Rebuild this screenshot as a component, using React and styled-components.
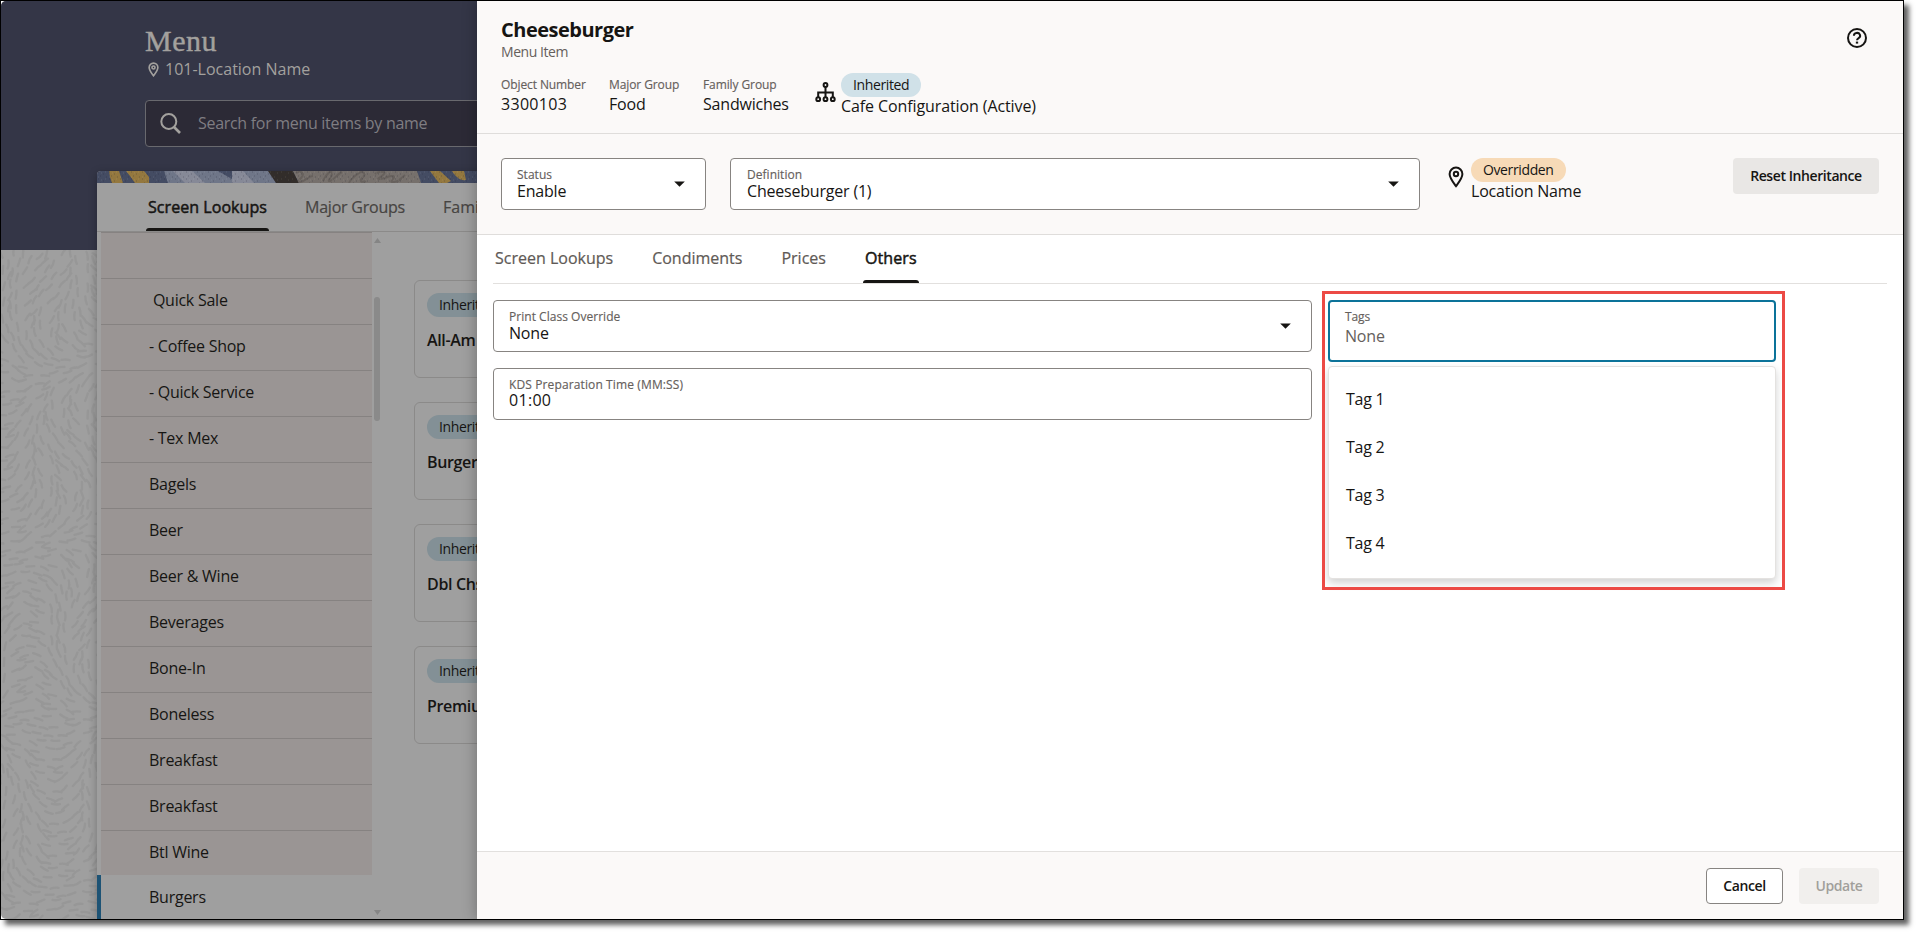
import styled, { createGlobalStyle, css } from "styled-components";

const GlobalStyle = createGlobalStyle`
  * {
    box-sizing: border-box;
  }

  body {
    margin: 0;
    min-height: 935px;
    background: #fff;
    color: #161513;
    font-family: "Open Sans", "Noto Sans", sans-serif;
    font-size: 16px;
    letter-spacing: -0.25px;
  }

  button {
    font-family: inherit;
  }
`;

const Frame = styled.div`
  position: relative;
  width: 1904px;
  height: 920px;
  border: 1px solid #000;
  background: #fff;
  box-shadow: 5px 5px 5px rgba(0, 0, 0, 0.62);
`;

/* ---------- page behind the drawer ---------- */

const Page = styled.div`
  position: relative;
  width: 480px;
  height: 918px;
  background: #9f9f9f;
  border-radius: 5px 0 0 5px;
  overflow: hidden;
`;

const Texture = styled.svg`
  position: absolute;
  left: 0;
  top: 249px;
`;

const Hero = styled.header`
  height: 249px;
  padding: 16px 0 0 144px;
  background: #343647;
  color: #a3a19e;
`;

const PageTitle = styled.h1`
  margin: 0;
  height: 41px;
  font-family: "Liberation Serif", serif;
  font-size: 30px;
  font-weight: 400;
  line-height: 47px;
  letter-spacing: 0.5px;
  -webkit-text-stroke: 0.4px #a3a19e;
`;

const PageLocation = styled.div`
  display: flex;
  align-items: center;
  gap: 6px;
  height: 22px;
  padding-left: 3px;
  letter-spacing: 0;
`;

const SearchBox = styled.div`
  display: flex;
  align-items: center;
  gap: 17px;
  width: 600px;
  height: 47px;
  margin-top: 20px;
  padding: 0 0 1px 14px;
  border: 1px solid #69696e;
  border-radius: 4px;
  background: #2c2a36;
  color: #7f7d82;
  letter-spacing: -0.3px;
`;

const Card = styled.section`
  position: relative;
  width: 600px;
  height: 748px;
  margin: -79px 0 0 96px;
  border-radius: 4px 4px 0 0;
  background: #9f9f9f;
  box-shadow: 0 2px 8px rgba(0, 0, 0, 0.28);
`;

const Band = styled.svg`
  display: block;
  border-radius: 4px 0 0 0;
`;

const CardTabs = styled.nav`
  display: flex;
  gap: 34px;
  height: 49px;
  padding-left: 49px;
  border-bottom: 1px solid #8b8a89;
`;

const Tab = styled.div`
  position: relative;
  padding: 0 2px;
  line-height: ${(p) => p.$line || 48}px;
  font-weight: 500;
  -webkit-text-stroke: 0.2px;
  white-space: nowrap;
  letter-spacing: ${(p) => p.$track || "0"};
  color: ${(p) => (p.$active ? "#161513" : p.$dim ? "#474442" : "#5f5a56")};

  ${(p) =>
    p.$active &&
    css`
      -webkit-text-stroke: 0.5px;

      &::after {
        content: "";
        position: absolute;
        left: 0;
        right: 0;
        bottom: 0;
        height: 3px;
        border-radius: 3px 3px 0 0;
        background: #161513;
      }
    `}
`;

const CardBody = styled.div`
  display: flex;
  height: 687px;
`;

const SideList = styled.ul`
  width: 275px;
  margin: 0;
  padding: 0;
  list-style: none;
`;

const SideItem = styled.li`
  height: 46px;
  margin-left: 4px;
  padding-left: 48px;
  border-top: 1px solid #868281;
  background: #9a9594;
  line-height: 43px;
  white-space: pre;

  ${(p) =>
    p.$selected &&
    css`
      height: 44px;
      margin-top: -1px;
      margin-left: 0;
      border-top: 0;
      border-left: 4px solid #1d5375;
      background: #9f9f9f;
      line-height: 45px;
    `}
`;

const ScrollTrack = styled.div`
  display: flex;
  flex-direction: column;
  align-items: center;
  width: 10px;
  padding: 6px 0 4px;
`;

const ScrollThumb = styled.div`
  width: 6px;
  height: 124px;
  margin: 54px 0 auto;
  border-radius: 3px;
  background: #8a8a8a;
`;

const Results = styled.div`
  display: flex;
  flex-direction: column;
  gap: 24px;
  margin: 48px 0 0 32px;
`;

const ResultCard = styled.div`
  width: 260px;
  height: 98px;
  padding: 12px;
  border: 1px solid #8b8a89;
  border-radius: 6px;
  font-weight: 600;
  white-space: nowrap;
  letter-spacing: -0.35px;
`;

const ResultName = styled.div`
  margin-top: 11px;
  line-height: 24px;
`;

/* ---------- drawer ---------- */

const Drawer = styled.aside`
  position: absolute;
  left: 476px;
  top: 0;
  display: flex;
  flex-direction: column;
  width: 1426px;
  height: 918px;
  background: #fff;
  box-shadow: 0 0 14px rgba(0, 0, 0, 0.3);
  clip-path: inset(0 0 0 -20px);
`;

const DrawerHeader = styled.header`
  display: flex;
  justify-content: space-between;
  height: 133px;
  padding: 17px 35px 0 24px;
  border-bottom: 1px solid #dfdddb;
  background: #fbf9f8;
`;

const DrawerTitle = styled.h2`
  margin: 0;
  font-size: 20px;
  font-weight: 700;
  line-height: 24px;
  letter-spacing: -0.5px;
`;

const DrawerSubtitle = styled.div`
  font-size: 14px;
  line-height: 20px;
  letter-spacing: -0.45px;
  color: #65605c;
`;

const Meta = styled.div`
  display: grid;
  grid-template-columns: 108px 94px 112px 26px auto;
  margin-top: 11px;
`;

const MetaItem = styled.div`
  display: flex;
  flex-direction: column;
  gap: 1px;
  padding-top: 4px;
`;

const Label = styled.div`
  font-size: 12px;
  font-weight: 500;
  -webkit-text-stroke: 0.15px;
  line-height: 16px;
  white-space: nowrap;
  letter-spacing: ${(p) => p.$track || "-0.1px"};
  color: #65605c;
`;

const Value = styled.div`
  line-height: 20px;
  white-space: nowrap;
  letter-spacing: ${(p) => p.$track || "-0.2px"};
`;

const Source = styled.div`
  display: flex;
  flex-direction: column;
  align-items: flex-start;
`;

const SourceName = styled.div`
  margin-top: -1px;
  line-height: 20px;
  white-space: nowrap;
  letter-spacing: ${(p) => p.$track || "-0.1px"};
`;

const pillColors = {
  inherited: "#d0e1e8",
  overridden: "#f7dab7",
  dimmed: "#839096",
};

const Pill = styled.span`
  display: inline-block;
  min-width: 80px;
  height: 24px;
  padding: 0 12px;
  border-radius: 12px;
  background: ${(p) => pillColors[p.$tone]};
  font-size: 14px;
  font-weight: 400;
  line-height: 24px;
  letter-spacing: -0.38px;
`;

const IconSlot = styled.div`
  padding-top: ${(p) => p.$top}px;
`;

const Toolbar = styled.div`
  display: flex;
  align-items: flex-start;
  height: 101px;
  padding: 24px 24px 0;
  border-bottom: 1px solid #dfdddb;
  background: #fbf9f8;
`;

const Field = styled.div`
  display: flex;
  align-items: center;
  justify-content: space-between;
  width: ${(p) => p.$width}px;
  height: 52px;
  margin-right: ${(p) => p.$gap || 0}px;
  padding: 0 20px 0 ${(p) => p.$inset || 15}px;
  border: 1px solid #878481;
  border-radius: 4px;
  background: #fff;
`;

const FieldText = styled.div`
  height: 50px;
  padding-top: 8px;

  ${Value} {
    margin-top: ${(p) => p.$shift ?? -2}px;
  }
`;

const OverrideInfo = styled.div`
  display: flex;
  gap: 7px;
`;

const Button = styled.button`
  height: 36px;
  padding: 0 0 2px;
  width: ${(p) => p.$width}px;
  border: 1px solid transparent;
  border-radius: 4px;
  background: #e9e7e5;
  color: #161513;
  font-size: 14px;
  font-weight: 600;
  letter-spacing: -0.42px;

  ${(p) =>
    p.$kind === "outlined" &&
    css`
      border-color: #878481;
      background: #fff;
    `}

  &:disabled {
    background: #f1efed;
    color: #a19f9b;
  }
`;

const ResetButton = styled(Button)`
  margin-left: auto;
`;

const DrawerBody = styled.div`
  flex: 1;
  padding: 0 16px;
`;

const DrawerTabs = styled.nav`
  display: flex;
  gap: 35px;
  height: 49px;
  border-bottom: 1px solid #e2e0de;
`;

const Form = styled.div`
  display: flex;
  gap: 16px;
  padding-top: 16px;
`;

const FormColumn = styled.div`
  display: flex;
  flex-direction: column;
  gap: 16px;
`;

const TagsPicker = styled.div`
  position: relative;
  width: 448px;
`;

const TagsField = styled.div`
  height: 62px;
  padding: 7px 15px;
  border: 2px solid #0c7399;
  border-radius: 4px;

  ${Value} {
    margin-top: 1px;
    color: #65605c;
  }
`;

const TagsMenu = styled.ul`
  position: absolute;
  left: 0;
  right: 0;
  top: 66px;
  height: 213px;
  margin: 0;
  padding: 8px 17px;
  border: 1px solid #e4e2e0;
  border-radius: 4px;
  background: #fff;
  box-shadow: 0 4px 8px rgba(0, 0, 0, 0.18);
  list-style: none;
`;

const TagOption = styled.li`
  line-height: 48px;
`;

const Highlight = styled.div`
  position: absolute;
  left: -6px;
  top: -9px;
  width: 463px;
  height: 299px;
  border: 3px solid #ec4a45;
`;

const Footer = styled.footer`
  display: flex;
  justify-content: flex-end;
  gap: 16px;
  height: 68px;
  padding: 16px 24px;
  border-top: 1px solid #e2e0de;
  background: #fbf9f8;
`;

/* ---------- icons ---------- */

const PinIcon = ({ width, height, stroke = 2 }) => (
  <svg width={width} height={height} viewBox="0 0 16 22" fill="none" stroke="currentColor" strokeWidth={stroke}>
    <path d="M8 20.2C5 16.2 1.6 12 1.6 8a6.4 6.4 0 0 1 12.8 0c0 4-3.4 8.2-6.4 12.2z" />
    <circle cx="8" cy="8" r="2.2" />
  </svg>
);

const SearchIcon = () => (
  <svg width="21" height="21" viewBox="0 0 21 21" fill="none" stroke="#a3a19e" strokeWidth="2">
    <circle cx="8.8" cy="8.5" r="7.5" />
    <path d="M14 14l6 6" strokeWidth="2.6" />
  </svg>
);

const TreeIcon = () => (
  <svg width="22" height="21" viewBox="0 0 22 21" fill="none" stroke="#161513" strokeWidth="2">
    <circle cx="10.5" cy="3" r="1.9" />
    <path d="M10.5 5v10M3.2 15v-4.5h14.6V15" />
    <circle cx="3.2" cy="17.2" r="1.9" />
    <circle cx="10.5" cy="17.2" r="1.9" />
    <circle cx="17.8" cy="17.2" r="1.9" />
  </svg>
);

const HelpIcon = () => (
  <svg width="22" height="22" viewBox="0 0 22 22" fill="none" stroke="#161513" strokeWidth="2">
    <circle cx="11" cy="11" r="9" />
    <path d="M7.9 8.8a3.1 2.8 0 1 1 4.7 2.3c-1 .6-1.6 1-1.6 2.2" />
    <path d="M11 14.6v2" strokeWidth="2.3" />
  </svg>
);

const Caret = () => (
  <svg width="11" height="6" viewBox="0 0 11 6">
    <path d="M0.2 0.4h10.6L5.5 5.8z" fill="#161513" />
  </svg>
);

const ScrollArrow = ({ down }) => (
  <svg width="7" height="5" viewBox="0 0 7 5">
    <path d={down ? "M0 0h7L3.5 5z" : "M0 5h7L3.5 0z"} fill="#858585" />
  </svg>
);

const BandArt = () => (
  <Band width="600" height="12" viewBox="0 0 600 12">
    <defs>
      <pattern id="grain" width="11" height="7" patternUnits="userSpaceOnUse">
        <path d="M1 1h1M6 3h1M9 6h1M3 5h1" stroke="#1e2233" strokeOpacity="0.3" />
        <path d="M4 2h1M8 1h1M1 6h1" stroke="#fff" strokeOpacity="0.1" />
      </pattern>
    </defs>
    <rect width="600" height="12" fill="#444c63" />
    <path d="M12 0h10l4 12H15l-2-6zM29 0h18l5 6v6H38l-5-7z" fill="#94783f" />
    <path d="M67 0h106l6 12H71z" fill="#6f7688" />
    <path d="M76 0h19l13 12H88zM135 0h11l11 12h-22z" fill="#868997" />
    <path d="M121 0h14v8z" fill="#444c63" />
    <path d="M171 0h25l6 12h-23z" fill="#322d2a" />
    <path d="M196 0h124l4 12H202z" fill="#76706c" />
    <g fill="none" stroke="#67615d" strokeWidth="2">
      <path d="M199 2c6-3 9 1 5 5s-2 5 2 3 6-5 10-5M226 10c4-8 8-11 9-8s-6 9-2 8 7-7 12-9M252 12c2-5 7-8 10-10s8 0 4 4-2 6 3 4M278 3c4-3 11-3 9 0s-9 5-4 5 9-4 13-3-6 7 1 6 8-5 11-7" />
    </g>
    <path d="M333 0h10l11 10-4 2h-8zM355 0h12l2 9c-6 1-10-3-14-9z" fill="#94783f" />
    <rect width="600" height="12" fill="url(#grain)" />
  </Band>
);

// short strokes that follow a slowly turning field
const buildDashes = () => {
  let d = "";
  for (let row = 0; row < 84; row++) {
    for (let col = 0; col < 9; col++) {
      const jx = Math.sin(row * 12.9 + col * 78.2) * 3;
      const jy = Math.sin(row * 39.3 + col * 11.1) * 2.5;
      const x = col * 12 + (row % 2) * 6 + jx;
      const y = row * 8 + jy + 4;
      const a = Math.sin(x / 38 + y / 70) * 1.3 + Math.cos(y / 47 - x / 60) * 1.1 + jx * 0.1;
      const dx = Math.cos(a) * 4;
      const dy = Math.sin(a) * 4;
      const bend = jy * 0.12;
      d += `M${(x - dx).toFixed(1)} ${(y - dy).toFixed(1)}Q${(x + dy * bend).toFixed(1)} ${(y - dx * bend).toFixed(1)} ${(x + dx).toFixed(1)} ${(y + dy).toFixed(1)}`;
    }
  }
  return d;
};

const dashes = buildDashes();

const categories = [
  "",
  " Quick Sale",
  "- Coffee Shop",
  "- Quick Service",
  "- Tex Mex",
  "Bagels",
  "Beer",
  "Beer & Wine",
  "Beverages",
  "Bone-In",
  "Boneless",
  "Breakfast",
  "Breakfast",
  "Btl Wine",
  "Burgers",
];

const items = ["All-Am", "Burger", "Dbl Chs", "Premiu"];

const tags = ["Tag 1", "Tag 2", "Tag 3", "Tag 4"];

const SelectField = ({ label, value, width, gap, inset }) => (
  <Field $width={width} $gap={gap} $inset={inset}>
    <FieldText>
      <Label $track="0.03px">{label}</Label>
      <Value>{value}</Value>
    </FieldText>
    <Caret />
  </Field>
);

const MenuPage = () => (
  <Page>
    <Texture width="96" height="669" viewBox="0 0 96 669">
      <path d={dashes} fill="none" stroke="#979797" strokeWidth="2.3" strokeLinecap="round" />
    </Texture>
    <Hero>
      <PageTitle>Menu</PageTitle>
      <PageLocation>
        <PinIcon width={11} height={15} stroke={2.4} />
        101-Location Name
      </PageLocation>
      <SearchBox>
        <SearchIcon />
        Search for menu items by name
      </SearchBox>
    </Hero>
    <Card>
      <BandArt />
      <CardTabs>
        <Tab $active $track="0.06px">Screen Lookups</Tab>
        <Tab $dim $track="-0.22px">Major Groups</Tab>
        <Tab $dim>Fami</Tab>
      </CardTabs>
      <CardBody>
        <SideList>
          {categories.map((name, i) => (
            <SideItem key={i} $selected={name === "Burgers"}>
              {name}
            </SideItem>
          ))}
        </SideList>
        <ScrollTrack>
          <ScrollArrow />
          <ScrollThumb />
          <ScrollArrow down />
        </ScrollTrack>
        <Results>
          {items.map((name) => (
            <ResultCard key={name}>
              <Pill $tone="dimmed">Inherit</Pill>
              <ResultName>{name}</ResultName>
            </ResultCard>
          ))}
        </Results>
      </CardBody>
    </Card>
  </Page>
);

const ItemDrawer = () => (
  <Drawer>
    <DrawerHeader>
      <div>
        <DrawerTitle>Cheeseburger</DrawerTitle>
        <DrawerSubtitle>Menu Item</DrawerSubtitle>
        <Meta>
          <MetaItem>
            <Label>Object Number</Label>
            <Value $track="0.3px">3300103</Value>
          </MetaItem>
          <MetaItem>
            <Label>Major Group</Label>
            <Value>Food</Value>
          </MetaItem>
          <MetaItem>
            <Label>Family Group</Label>
            <Value>Sandwiches</Value>
          </MetaItem>
          <IconSlot $top={9}>
            <TreeIcon />
          </IconSlot>
          <Source>
            <Pill $tone="inherited">Inherited</Pill>
            <SourceName>Cafe Configuration (Active)</SourceName>
          </Source>
        </Meta>
      </div>
      <IconSlot $top={9}>
        <HelpIcon />
      </IconSlot>
    </DrawerHeader>

    <Toolbar>
      <SelectField label="Status" value="Enable" width={205} gap={24} />
      <SelectField label="Definition" value="Cheeseburger (1)" width={690} gap={28} inset={16} />
      <OverrideInfo>
        <IconSlot $top={8}>
          <PinIcon width={16} height={22} />
        </IconSlot>
        <Source>
          <Pill $tone="overridden">Overridden</Pill>
          <SourceName $track="-0.18px">Location Name</SourceName>
        </Source>
      </OverrideInfo>
      <ResetButton $width={146}>Reset Inheritance</ResetButton>
    </Toolbar>

    <DrawerBody>
      <DrawerTabs>
        <Tab $line={47}>Screen Lookups</Tab>
        <Tab $line={47}>Condiments</Tab>
        <Tab $line={47}>Prices</Tab>
        <Tab $line={47} $active $track="0.1px">Others</Tab>
      </DrawerTabs>
      <Form>
        <FormColumn>
          <SelectField label="Print Class Override" value="None" width={819} />
          <Field $width={819}>
            <FieldText $shift={-3}>
              <Label $track="0.12px">KDS Preparation Time (MM:SS)</Label>
              <Value $track="0.3px">01:00</Value>
            </FieldText>
          </Field>
        </FormColumn>
        <TagsPicker>
          <TagsField>
            <Label>Tags</Label>
            <Value>None</Value>
          </TagsField>
          <TagsMenu>
            {tags.map((tag) => (
              <TagOption key={tag}>{tag}</TagOption>
            ))}
          </TagsMenu>
          <Highlight />
        </TagsPicker>
      </Form>
    </DrawerBody>

    <Footer>
      <Button $kind="outlined" $width={77}>Cancel</Button>
      <Button $width={80} disabled>Update</Button>
    </Footer>
  </Drawer>
);

export default function App() {
  return (
    <Frame>
      <GlobalStyle />
      <MenuPage />
      <ItemDrawer />
    </Frame>
  );
}
